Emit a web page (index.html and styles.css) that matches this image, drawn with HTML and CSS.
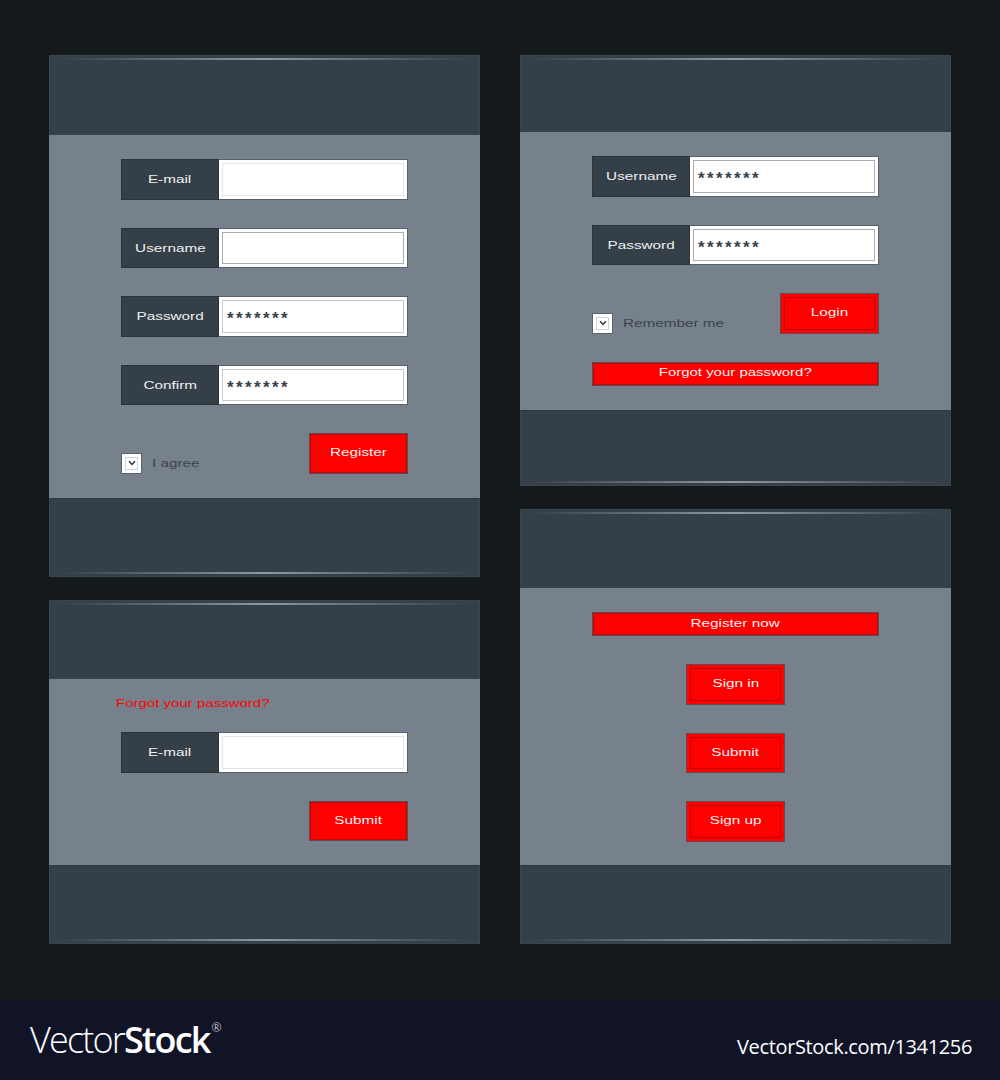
FILE: index.html
```html
<!DOCTYPE html>
<html lang="en">
<head>
<meta charset="utf-8">
<title>Login forms</title>
<link rel="stylesheet" href="styles.css">
</head>
<body>
<main class="sheet">
  <div class="column">
    <section class="panel">
      <div class="cap cap-top"></div>
      <div class="body body-register">
        <div class="field"><span class="label"><span class="wide">E-mail</span></span><span class="input input-faint"></span></div>
        <div class="field"><span class="label"><span class="wide">Username</span></span><span class="input input-strong"></span></div>
        <div class="field"><span class="label"><span class="wide">Password</span></span><span class="input">*******</span></div>
        <div class="field"><span class="label"><span class="wide">Confirm</span></span><span class="input">*******</span></div>
        <div class="actions">
          <label class="check"><span class="box"><span class="box-inner"><svg viewBox="0 0 8 6" width="8" height="6"><path d="M1 1.2 4 4.4 7 1.2" fill="none" stroke="#2f3840" stroke-width="1.5"/></svg></span></span><span class="check-text wide-left">I agree</span></label>
          <button class="btn btn-plain"><span class="wide">Register</span></button>
        </div>
      </div>
      <div class="cap cap-bottom"></div>
    </section>
    <section class="panel">
      <div class="cap cap-top"></div>
      <div class="body body-forgot">
        <div class="red-title wide-left">Forgot your password?</div>
        <div class="field"><span class="label"><span class="wide">E-mail</span></span><span class="input input-faint"></span></div>
        <div class="actions actions-end">
          <button class="btn btn-plain"><span class="wide">Submit</span></button>
        </div>
      </div>
      <div class="cap cap-bottom"></div>
    </section>
  </div>
  <div class="column">
    <section class="panel">
      <div class="cap cap-top cap-short"></div>
      <div class="body body-login">
        <div class="field"><span class="label"><span class="wide">Username</span></span><span class="input input-strong">*******</span></div>
        <div class="field"><span class="label"><span class="wide">Password</span></span><span class="input input-strong">*******</span></div>
        <div class="actions">
          <label class="check"><span class="box"><span class="box-inner"><svg viewBox="0 0 8 6" width="8" height="6"><path d="M1 1.2 4 4.4 7 1.2" fill="none" stroke="#2f3840" stroke-width="1.5"/></svg></span></span><span class="check-text wide-left">Remember me</span></label>
          <button class="btn"><span class="wide">Login</span></button>
        </div>
        <button class="btn btn-bar"><span class="wide wide-bar">Forgot your password?</span></button>
      </div>
      <div class="cap cap-bottom cap-short"></div>
    </section>
    <section class="panel">
      <div class="cap cap-top"></div>
      <div class="body body-links">
        <button class="btn btn-bar"><span class="wide">Register now</span></button>
        <button class="btn"><span class="wide">Sign in</span></button>
        <button class="btn"><span class="wide">Submit</span></button>
        <button class="btn"><span class="wide">Sign up</span></button>
      </div>
      <div class="cap cap-bottom"></div>
    </section>
  </div>
</main>
<footer class="stock">
  <div class="logo"><span class="logo-light">Vector</span><span class="logo-bold">Stock</span><sup class="logo-mark">®</sup></div>
  <div class="stock-id">VectorStock.com/1341256</div>
</footer>
</body>
</html>
```

FILE: styles.css
```css
* { box-sizing: border-box; }
html, body { margin: 0; padding: 0; }
body {
  width: 1000px;
  height: 1080px;
  overflow: hidden;
  background: #14191c;
  font-family: "Liberation Sans", Arial, sans-serif;
}
.sheet {
  height: 1000px;
  padding: 55px 49px 0;
  display: flex;
  gap: 40px;
}
.column {
  width: 431px;
  display: flex;
  flex-direction: column;
  gap: 23px;
}
.panel {
  display: flex;
  flex-direction: column;
}
.cap {
  position: relative;
  height: 79px;
  background: #353f48;
  border: 1px solid #3b454e;
}
.column:first-child .panel:first-child .cap-top { height: 80px; }
.cap-short { height: 77px; }
.cap-bottom.cap-short { height: 76px; }
.cap::after {
  content: "";
  position: absolute;
  left: 2%;
  right: 2%;
  height: 2px;
  background: linear-gradient(90deg, rgba(150,160,168,0), #8f989f 50%, rgba(150,160,168,0));
}
.cap-top::after { top: 2px; }
.cap-bottom::after { bottom: 2px; }
.cap-bottom { border-top-color: #2f373f; }
.body {
  background: #76818c;
  padding: 24px 72px 0;
  display: flex;
  flex-direction: column;
  gap: 28px;
}
.body-register { height: 363px; }
.body-forgot { height: 186px; padding-top: 18px; }
.body-login { height: 278px; }
.body-links { height: 277px; align-items: center; }
.field {
  height: 40.5px;
  display: flex;
  flex: none;
}
.label {
  width: 98px;
  background: #353f48;
  border: 1px solid #2b3239;
  color: #eef0f1;
  font-size: 11px;
  display: flex;
  align-items: center;
  justify-content: center;
}
.wide { display: inline-block; transform: scaleX(1.39); white-space: nowrap; }
.wide-left { display: inline-block; transform: scaleX(1.39); transform-origin: left center; white-space: nowrap; }
.wide-bar { transform: scaleX(1.36); }
.input {
  flex: 1;
  background: #fff;
  border: 1px solid #56616b;
  border-left: 0;
  box-shadow: inset 0 0 0 3px #fff, inset 0 0 0 4px #c6c9cb;
  padding: 0 4px 0 8px;
  color: #39424b;
  font-size: 17px;
  letter-spacing: 2.4px;
  line-height: 43px;
  font-weight: 700;
}
.input-faint { box-shadow: inset 0 0 0 3px #fff, inset 0 0 0 4px #e2e4e5; }
.input-strong { box-shadow: inset 0 0 0 3px #fff, inset 0 0 0 4px #a8adb0; }
.actions {
  display: flex;
  justify-content: space-between;
  align-items: flex-end;
  flex: none;
}
.actions-end { justify-content: flex-end; }
.check { display: flex; align-items: center; gap: 10px; }
.box {
  width: 21px;
  height: 21px;
  background: #fff;
  border: 1px solid #59636d;
  display: flex;
  align-items: center;
  justify-content: center;
}
.box-inner {
  width: 13px;
  height: 13px;
  border: 1px solid #d2d4d6;
  display: flex;
  align-items: center;
  justify-content: center;
}
.check-text { color: #3b444d; font-size: 11px; margin-bottom: 1px; }
.btn {
  width: 99px;
  height: 40.5px;
  padding: 0 0 2px;
  background: #f00;
  color: #fbf3f3;
  font: 11px "Liberation Sans", Arial, sans-serif;
  border: 1px solid #5e4a50;
  box-shadow: inset 0 0 0 3px #f00, inset 0 0 0 4px #b80808;
  flex: none;
}
.btn-plain { box-shadow: inset 0 0 0 1px #c40606; }
.btn-bar {
  width: 100%;
  height: 24px;
  padding: 0 0 3px;
  box-shadow: inset 0 0 0 1px #c40606;
}
.body-links .btn-bar { width: 287px; }
.red-title {
  color: #f00;
  font-size: 11px;
  margin-left: -5px;
  height: 13px;
  margin-bottom: -6px;
  transform: scaleX(1.365);
}
.stock {
  height: 80px;
  background: #111427;
  color: #fff;
  padding: 0 28px 0 30px;
  display: flex;
  justify-content: space-between;
  align-items: center;
}
.logo {
  font-family: "Open Sans", sans-serif;
  font-size: 36px;
  line-height: 1;
  letter-spacing: -1.8px;
  display: flex;
  align-items: flex-start;
}
.logo-light { font-weight: 300; }
.logo-bold { font-weight: 600; }
.logo-mark { font-size: 12px; font-weight: 300; letter-spacing: 0; line-height: 1; margin: 0 0 0 2px; }
.stock-id {
  font-family: "Open Sans", sans-serif;
  font-size: 20px;
  letter-spacing: -0.35px;
  margin-top: 12px;
}
```
